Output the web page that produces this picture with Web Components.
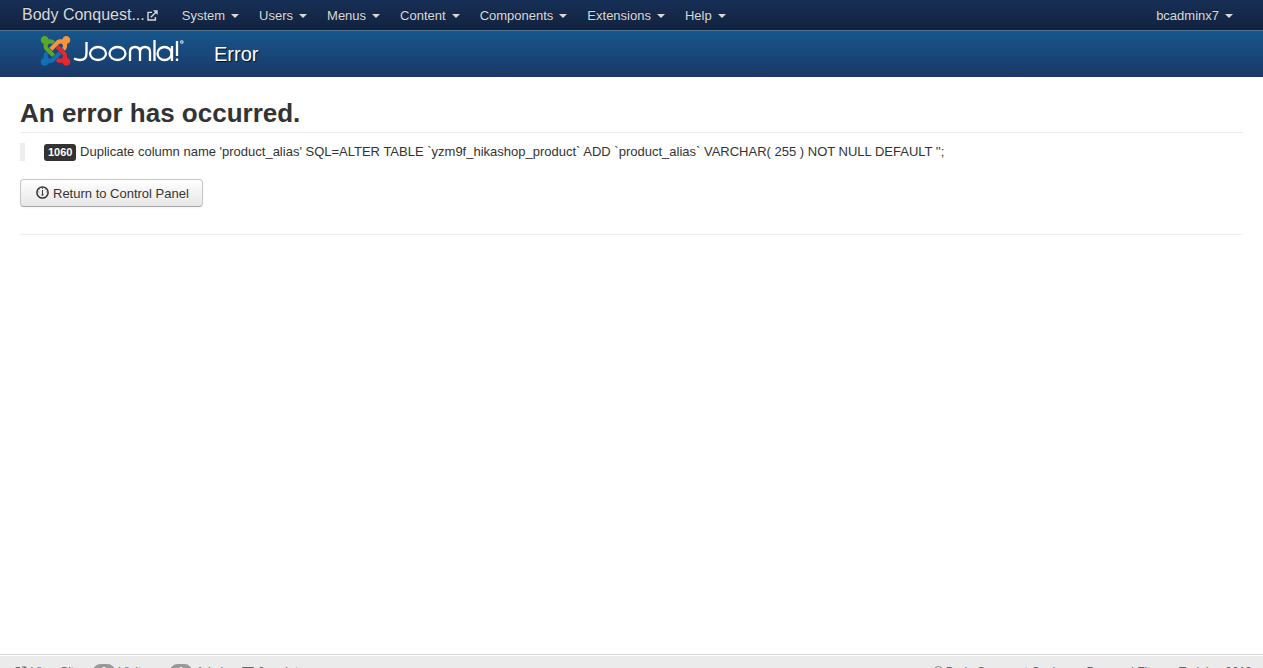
<!DOCTYPE html>
<html lang="en">
<head>
<meta charset="utf-8">
<meta name="viewport" content="width=device-width, initial-scale=1">
<title>Body Conquest - Error</title>
<style>
html, body { margin: 0; height: 100%; overflow: hidden; }
body { font: 13px/18px "Liberation Sans", Arial, sans-serif; color: #333; background: #fff; }
</style>
</head>
<body>
<admin-page>
  <admin-navbar slot="nav"></admin-navbar>
  <admin-header slot="header">Error</admin-header>
  <error-report slot="main" code="1060">Duplicate column name 'product_alias' SQL=ALTER TABLE `yzm9f_hikashop_product` ADD `product_alias` VARCHAR( 255 ) NOT NULL DEFAULT '';</error-report>
  <status-bar slot="status"></status-bar>
</admin-page>
<script>
function define(name, html) {
  const template = document.createElement('template');
  template.innerHTML = html;
  customElements.define(name, class extends HTMLElement {
    constructor() {
      super();
      this.attachShadow({ mode: 'open' }).append(template.content.cloneNode(true));
    }
    connectedCallback() {
      const code = this.shadowRoot.querySelector('[data-code]');
      if (code) code.textContent = this.getAttribute('code');
    }
  });
}

define('admin-page', `
<style>
:host { display: flex; flex-direction: column; height: 100vh; overflow: hidden; }
main { flex: 1; min-height: 0; padding: 20px 20px 0; }
</style>
<slot name="nav"></slot>
<slot name="header"></slot>
<main><slot name="main"></slot></main>
<slot name="status"></slot>`);

define('menu-item', `
<style>
:host { display: block; }
a { display: flex; align-items: center; gap: 6px; padding: 7px 10px 5px; color: #d9d9d9; text-decoration: none; line-height: 18px; text-shadow: 0 -1px 0 rgba(0,0,0,.25); }
i { border: 4px solid transparent; border-top-color: currentColor; border-bottom: 0; }
</style>
<a href="#"><span><slot></slot></span><i></i></a>`);

define('admin-navbar', `
<style>
:host { display: flex; height: 30px; flex: none; box-sizing: border-box; padding: 0 20px 0 22px; background: linear-gradient(#172f56, #11223e); }
.brand { display: flex; align-items: center; gap: 2px; font-size: 16px; color: #d9d9d9; text-decoration: none; margin-right: 14px; text-shadow: 0 -1px 0 rgba(0,0,0,.25); }
nav { display: flex; flex: 1; }
</style>
<a class="brand" href="#"><span>Body Conquest...</span>
<svg width="11" height="11" viewBox="0 0 11 11" fill="none" stroke="currentColor" stroke-width="1.4"><path d="M5 2.4H1V10H8.400V7"/><path d="M3.800 7.200 8.800 2.200"/><path d="M6 .3h4.700V5z" fill="currentColor" stroke="none"/></svg></a>
<nav><menu-item>System</menu-item><menu-item>Users</menu-item><menu-item>Menus</menu-item><menu-item>Content</menu-item><menu-item>Components</menu-item><menu-item>Extensions</menu-item><menu-item>Help</menu-item></nav>
<menu-item>bcadminx7</menu-item>`);

define('joomla-logo', `
<style>:host, svg { display: block; }</style>
<svg width="146" height="31" viewBox="0 0 146 31" role="img" aria-label="Joomla!">
<g transform="translate(.7 -2) scale(.0662)">
<path fill="#5ba72b" d="M.6 92.1C.6 58.8 27.4 32 60.4 32c30 0 54.5 21.9 59.2 50.2 32.6-7.6 67.1.6 96.500 30l-44.300 44.300c-20.500-20.500-42.600-16.300-55.400-3.500-14.300 14.300-14.300 37.900 0 52.200l99.500 99.500-44 44.300c-87.700-87.200-49.700-49.700-99.800-99.700-26.800-26.500-35-64.800-24.800-98.900C20.400 144.600.6 120.700.6 92.100z"/>
<path fill="#f9943b" d="M130.100 208.500l44.300 44.300c10-10 89.700-89.700 99.700-99.800 14.300-14.300 37.600-14.300 51.900 0 12.800 12.800 17 35-3.500 55.400l44 44.300c31.200-31.200 38.500-67.600 28.900-101.200 29.200-4.100 51.900-29.200 51.900-59.500 0-33.200-26.800-60.100-59.800-60.100-30.300 0-55.400 22.500-59.500 51.600-33.800-9.900-71.700-1.500-98.300 25.100-18.300 19.100-71.100 71.500-99.600 99.900z"/>
<path fill="#e6282c" d="M396.400 360.700c8.200-32.700-.9-68.500-26.300-93.900-11.800-12.200 5 4.700-99.500-99.700l-44.300 44.300 99.700 99.700c14.300 14.300 14.300 37.600 0 51.900-12.800 12.800-35 17-55.400-3.500l-44 44.300c27.600 30.200 68 38.800 102.700 28 5.500 27.400 29.700 48.100 58.900 48.100 33 0 59.800-26.800 59.800-60.100 0-30.200-22.500-55-51.600-59.100z"/>
<path fill="#1370b4" d="M312.100 307.600l-44-44.300c-87 86.400-50.400 50.400-99.700 99.800-14.300 14.300-37.600 14.300-51.900 0-13.100-13.400-16.900-35.300 3.200-55.400l-44-44.300c-30.200 30.200-38 65.200-29.500 98.300-26.700 6-46.200 29.900-46.200 58.200C0 453.200 26.800 480 59.800 480c28.600 0 52.500-19.800 58.600-46.700 32.700 8.200 68.500-.6 94.200-26 32.100-32 12.200-12.400 99.500-99.700z"/>
</g>
<g fill="none" stroke="#fff" stroke-width="2.300">
<path d="M46.500 6V17Q46.500 24 40 24Q37 24 34 22.500"/>
<ellipse cx="58" cy="17.500" rx="8" ry="6.500"/><ellipse cx="77.500" cy="17.500" rx="8" ry="6.500"/>
<path d="M90 25V16Q90 11 95 11Q100 11 100 16V25M100 16Q100 11 105 11Q110 11 110 16V25M114.500 4V25"/>
<ellipse cx="124.500" cy="17.500" rx="7" ry="6.500"/><path d="M132 10V25M137 5V20M137 22.500V25"/>
</g>
<circle cx="141.800" cy="6" r="1.500" fill="#6f9abf" stroke="#a9c1d8"/>
</svg>`);

define('admin-header', `
<style>
:host { display: flex; flex: none; align-items: flex-start; gap: 28px; height: 47px; box-sizing: border-box; padding: 5px 20px 0 40px; border-top: 1px solid #4c7391; background: linear-gradient(#17568c, #1a3867); }
h1 { margin: 0; padding-top: 3px; font-size: 20px; line-height: 30px; font-weight: 400; color: #fff; text-shadow: 1px 1px 1px rgba(0,0,0,.8); }
</style>
<joomla-logo></joomla-logo><h1><slot></slot></h1>`);

define('icon-button', `
<style>
:host { display: block; }
button { display: flex; align-items: center; gap: 4px; font: inherit; line-height: 18px; color: #333; padding: 5px 13px 3px 15px; border: 1px solid #bbb; border-color: #c5c5c5 #c5c5c5 #a9a9a9; border-radius: 4px; background: linear-gradient(#fff, #e6e6e6); box-shadow: inset 0 1px 0 rgba(255,255,255,.2), 0 1px 2px rgba(0,0,0,.05); text-shadow: 0 1px 1px rgba(255,255,255,.75); }
svg { margin-bottom: 3px; }
</style>
<button type="button"><svg width="13" height="13" viewBox="0 0 13 13" fill="none" stroke="#333"><circle cx="6.500" cy="6.500" r="5.600" stroke-width="1.500"/><path d="M6.500 4V8.500" stroke-width="1"/><circle cx="6.500" cy="8.800" r="1" fill="#333" stroke="none"/><path d="M6.500 2V3M3.600 3.500l.6.600M9.400 3.500l-.6.600M2.400 6h.8M10.600 6h-.8" stroke-width=".8"/></svg><span><slot></slot></span></button>`);

define('error-report', `
<style>
:host { display: block; }
h2 { margin: 0 0 10px; padding-bottom: 3px; font-size: 26px; line-height: 32px; border-bottom: 1px solid #eee; }
blockquote { margin: 0 0 18px; padding-left: 19px; border-left: 5px solid #eee; line-height: 18px; }
.code { display: inline-block; padding: 2px 4px; border-radius: 3px; background: #333; color: #fff; font-size: 11px; line-height: 13px; font-weight: 700; text-shadow: 0 -1px 0 rgba(0,0,0,.25); }
hr { margin: 27px 0 0; border: 0; border-top: 1px solid #eee; }
</style>
<h2>An error has occurred.</h2>
<blockquote><span class="code" data-code></span> <slot></slot></blockquote>
<icon-button>Return to Control Panel</icon-button>
<hr>`);

define('status-bar', `
<style>
:host { display: flex; flex: none; justify-content: space-between; height: 14px; overflow: hidden; box-sizing: border-box; padding: 8px 11px 0 15px; border-top: 1px solid #d4d4d4; box-shadow: inset 0 1px 0 #fff; background: #ebebeb; color: #626262; font-size: 12px; line-height: 18px; white-space: nowrap; }
.items { display: flex; gap: 12px; }
a, .item { display: flex; align-items: flex-start; gap: 4px; color: inherit; text-decoration: none; }
b { box-sizing: border-box; width: 22px; height: 15px; margin-top: 1px; border-radius: 8px; background: #999; color: #fff; font-size: 11px; line-height: 15px; text-align: center; }
svg { margin-top: 3px; }
</style>
<div class="items">
<a href="#"><svg width="12" height="12" viewBox="0 0 12 12" fill="none" stroke="currentColor"><path d="M5 1.500H1V11H9V7M4 7l6-6M7 1h4v4"/></svg>View Site</a>
<span class="item"><b>0</b>Visitors</span>
<span class="item"><b>1</b>Admin</span>
<a href="#"><svg width="12" height="12" viewBox="0 0 12 12" fill="none" stroke="currentColor"><path d="M.5 1.500h11v8H.5zM1 2l5 4 5-4"/></svg>0 updates</a>
</div>
<span>© Body Conquest Cochrane Personal Fitness Training 2013</span>`);
</script>
</body>
</html>
